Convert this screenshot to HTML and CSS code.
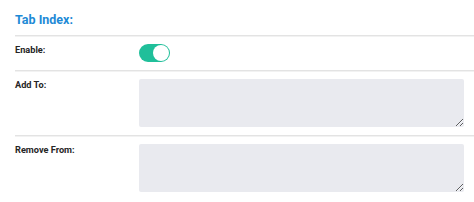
FILE: index.html
```html
<!DOCTYPE html>
<html>
<head>
  <meta charset="utf-8"/>
  <title>Tab Index</title>
  <link rel="stylesheet" href="styles.css">
</head>
<body>
  <div class="panel">
    <h2 class="panel-title">Tab Index:</h2>

    <div class="field">
      <label class="field-label" for="tab-enable">Enable:</label>
      <div class="field-control">
        <label class="switch">
          <input type="checkbox" id="tab-enable" checked>
          <span class="slider"></span>
        </label>
      </div>
    </div>

    <div class="field">
      <label class="field-label" for="tab-add">Add To:</label>
      <div class="field-control">
        <textarea id="tab-add" class="input-area"></textarea>
      </div>
    </div>

    <div class="field">
      <label class="field-label" for="tab-remove">Remove From:</label>
      <div class="field-control">
        <textarea id="tab-remove" class="input-area"></textarea>
      </div>
    </div>
  </div>
</body>
</html>
```

FILE: styles.css
```css
body {
  margin: 0;
  font-family: Roboto, "Liberation Sans", Arial, sans-serif;
  background-color: #fff;
  color: #222;
}

.panel {
  margin-left: 15px;
}

.panel-title {
  margin: 0;
  padding: 12px 0 7px;
  font-size: 12.5px;
  line-height: 16px;
  font-weight: 700;
  color: #1d8ad6;
}

.field {
  display: flex;
  border-top: 1px solid #e3e3e3;
  box-shadow: inset 0 1px 0 #f2f2f2;
  padding: 8px 0 8px;
}

.field-label {
  width: 124px;
  flex-shrink: 0;
  font-size: 9.2px;
  line-height: 12px;
  font-weight: 700;
  color: #262626;
}

.field-control {
  flex: 1;
  padding-right: 10px;
}

.input-area {
  display: block;
  box-sizing: border-box;
  width: 100%;
  height: 48px;
  margin: 0;
  border: none;
  border-radius: 2px;
  background-color: #e9eaef;
  font-family: inherit;
}

.switch {
  position: relative;
  display: block;
  width: 31px;
  height: 18px;
}

.switch input {
  opacity: 0;
  width: 0;
  height: 0;
}

.slider {
  position: absolute;
  top: 0;
  left: 0;
  right: 0;
  bottom: 0;
  background-color: #ccc;
  border-radius: 9px;
  cursor: pointer;
}

.slider:before {
  position: absolute;
  content: "";
  width: 16px;
  height: 16px;
  left: 1.5px;
  top: 1px;
  background-color: #fff;
  border-radius: 50%;
}

input:checked + .slider {
  background-color: #20bf9a;
}

input:checked + .slider:before {
  transform: translateX(12px);
}
```
